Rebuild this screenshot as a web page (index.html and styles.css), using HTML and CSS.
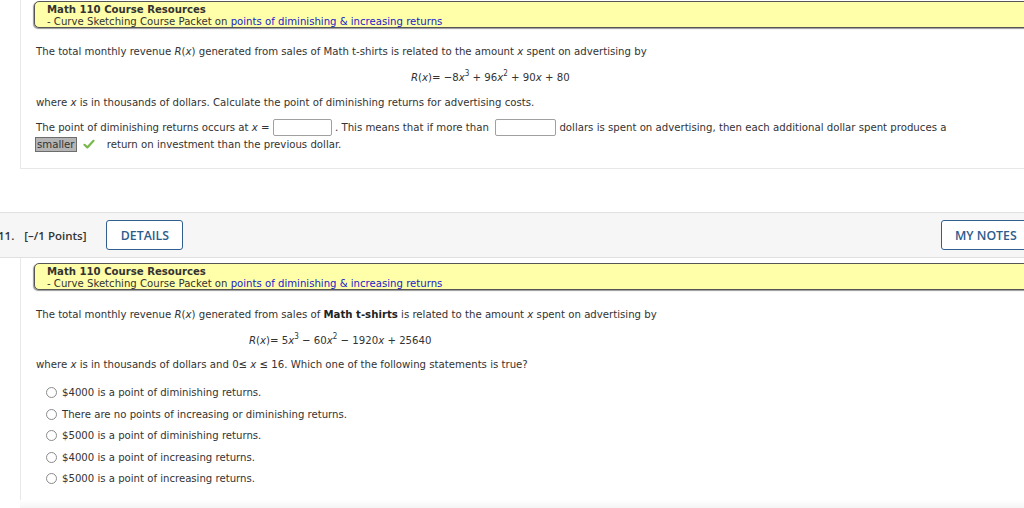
FILE: index.html
```html
<!DOCTYPE html>
<html>
<head>
<meta charset="utf-8">
<link rel="stylesheet" href="styles.css">
</head>
<body>
<div class="page">
  <section class="panel panel-first">
    <div class="resbox">
      <div class="res-title">Math 110 Course Resources</div>
      <div class="res-line">- Curve Sketching Course Packet on <span class="link">points of diminishing &amp; increasing returns</span></div>
    </div>
    <p class="para p1">The total monthly revenue <i>R</i>(<i>x</i>) generated from sales of Math t-shirts is related to the amount <i>x</i> spent on advertising by</p>
    <p class="para formula f1"><i>R</i>(<i>x</i>)= &minus;8<i>x</i><sup>3</sup> + 96<i>x</i><sup>2</sup> + 90<i>x</i> + 80</p>
    <p class="para p-where">where <i>x</i> is in thousands of dollars. Calculate the point of diminishing returns for advertising costs.</p>
    <p class="para p-answer">The point of diminishing returns occurs at <i>x</i> = <span class="inp inp1"></span> . This means that if more than <span class="inp inp2"></span> dollars is spent on advertising, then each additional dollar spent produces a<br><span class="sel">smaller</span><svg class="check" width="12" height="10" viewBox="0 0 12 10"><path d="M1.5 5.8 L4.3 8.4 L10.5 1.8" fill="none" stroke="#78b84a" stroke-width="2.2" stroke-linecap="round" stroke-linejoin="round"/></svg> return on investment than the previous dollar.</p>
  </section>

  <div class="qhead">
    <span class="qnum">11.</span>
    <span class="qpts">[&ndash;/1 Points]</span>
    <span class="btn btn-details">DETAILS</span>
    <span class="spacer"></span>
    <span class="btn btn-notes">MY NOTES</span>
  </div>

  <section class="panel panel-second">
    <div class="resbox">
      <div class="res-title">Math 110 Course Resources</div>
      <div class="res-line">- Curve Sketching Course Packet on <span class="link">points of diminishing &amp; increasing returns</span></div>
    </div>
    <p class="para p1">The total monthly revenue <i>R</i>(<i>x</i>) generated from sales of <b class="mb">Math t-shirts</b> is related to the amount <i>x</i> spent on advertising by</p>
    <p class="para formula f2"><i>R</i>(<i>x</i>)= 5<i>x</i><sup>3</sup> &minus; 60<i>x</i><sup>2</sup> &minus; 1920<i>x</i> + 25640</p>
    <p class="para p-where">where <i>x</i> is in thousands of dollars and 0&le; <i>x</i> &le; 16. Which one of the following statements is true?</p>
    <ul class="options">
      <li><span class="radio"></span>$4000 is a point of diminishing returns.</li>
      <li><span class="radio"></span>There are no points of increasing or diminishing returns.</li>
      <li><span class="radio"></span>$5000 is a point of diminishing returns.</li>
      <li><span class="radio"></span>$4000 is a point of increasing returns.</li>
      <li><span class="radio"></span>$5000 is a point of increasing returns.</li>
    </ul>
  </section>
  <div class="next-edge"></div>
</div>
</body>
</html>
```

FILE: styles.css
```css
html, body {
  margin: 0;
  padding: 0;
  background: #ffffff;
  overflow: hidden;
}
.page {
  width: 1024px;
  height: 508px;
  overflow: hidden;
  font-family: "DejaVu Sans Condensed", "DejaVu Sans", sans-serif;
  font-size: 11.3px;
  color: #333333;
}
.panel {
  margin-left: 20px;
  border-left: 1px solid #e8e8e8;
  padding-left: 13px;
}
.panel-first {
  border-bottom: 1px solid #e8e8e8;
  padding-top: 1px;
  height: 169px;
  box-sizing: border-box;
}
.resbox {
  width: 1000px;
  height: 27px;
  box-sizing: border-box;
  background: #ffffa9;
  border: 1px solid #555555;
  border-radius: 5px 0 0 5px;
  box-shadow: -1px 1px 1px #999999;
  padding: 2px 0 0 12px;
  font-family: "DejaVu Sans", Verdana, sans-serif;
  font-size: 10.15px;
  line-height: 11.5px;
  color: #333333;
}
.res-title {
  font-weight: bold;
}
.link {
  color: #1a1acc;
}
.para {
  margin: 0;
  line-height: 16px;
  white-space: nowrap;
}
.p1 {
  margin-top: 16px;
  padding-left: 2px;
}
.formula {
  margin-top: 10px;
}
.f1 { padding-left: 377px; }
.f2 { padding-left: 215px; }
sup {
  font-size: 8px;
  line-height: 0;
  vertical-align: 5px;
}
.p-where {
  margin-top: 9px;
  padding-left: 2px;
}
.p-answer {
  margin-top: 8px;
  line-height: 17px;
  padding-left: 2px;
}
.inp {
  display: inline-block;
  height: 17px;
  box-sizing: border-box;
  border: 1px solid #a0a0a0;
  border-radius: 2px;
  background: #ffffff;
  vertical-align: middle;
  margin-top: -2px;
}
.inp1 { width: 59px; }
.inp2 { width: 61px; margin-left: 3px; }
.sel {
  display: inline-block;
  background: #b4b4b4;
  border: 1px solid #6d6d6d;
  padding: 0 1px;
  line-height: 13px;
  margin-left: -1px;
  color: #333333;
}
.check {
  vertical-align: -1px;
  margin: 0 9px 0 6px;
}
.mb {
  font-weight: bold;
  color: #222222;
}

.qhead {
  margin-top: 43px;
  height: 46px;
  box-sizing: border-box;
  background: #f6f6f6;
  border-top: 1px solid #e0e0e0;
  border-bottom: 1px solid #e0e0e0;
  display: flex;
  align-items: center;
  font-family: "Open Sans", sans-serif;
  font-weight: 600;
  font-size: 11.5px;
  color: #333333;
}
.qnum {
  margin-left: -2px;
}
.qpts {
  margin-left: 10px;
}
.btn {
  display: inline-flex;
  align-items: center;
  justify-content: center;
  height: 30px;
  box-sizing: border-box;
  border: 1.5px solid #2f5f8f;
  border-radius: 3px;
  background: #ffffff;
  color: #2b5c8c;
  font-family: "Open Sans", sans-serif;
  font-weight: 600;
  font-size: 12.3px;
}
.btn-details {
  width: 77px;
  margin-left: 20px;
}
.spacer { flex: 1; }
.btn-notes {
  width: 90px;
  margin-right: -7px;
  justify-content: flex-start;
  padding-left: 13px;
}

.panel-second {
  padding-top: 5px;
  height: 242px;
  box-sizing: border-box;
}
.panel-second .p1 {
  margin-top: 17px;
}
.panel-second .formula { margin-top: 10px; }
.panel-second .p-where { margin-top: 8px; }
.options {
  list-style: none;
  margin: 13px 0 0 0;
  padding: 0 0 0 12px;
  font-family: "DejaVu Sans", Verdana, sans-serif;
  font-size: 10.15px;
  line-height: 13px;
}
.options li {
  height: 21.6px;
  display: flex;
  align-items: flex-start;
}
.radio {
  display: inline-block;
  width: 11px;
  height: 11px;
  box-sizing: border-box;
  border: 1px solid #8a8a8a;
  border-radius: 50%;
  background: #ffffff;
  margin-right: 5px;
  margin-top: 1px;
}
.next-edge {
  margin-left: 20px;
  height: 10px;
  background: linear-gradient(#ffffff, #f2f2f2);
}
```
